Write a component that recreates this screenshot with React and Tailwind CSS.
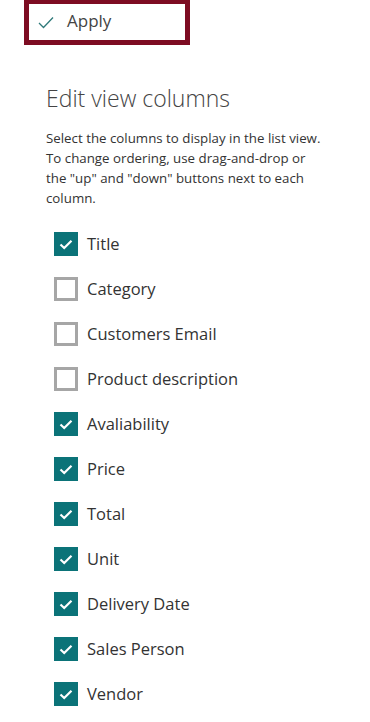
import React, { useState } from 'react'

const initialColumns = [
	{ name: 'Title', checked: true },
	{ name: 'Category', checked: false },
	{ name: 'Customers Email', checked: false },
	{ name: 'Product description', checked: false },
	{ name: 'Avaliability', checked: true },
	{ name: 'Price', checked: true },
	{ name: 'Total', checked: true },
	{ name: 'Unit', checked: true },
	{ name: 'Delivery Date', checked: true },
	{ name: 'Sales Person', checked: true },
	{ name: 'Vendor', checked: true },
];

function App() {
	const [columns, setColumns] = useState(initialColumns);

	function toggle(i) {
		setColumns(columns.map((c, idx) => idx === i ? { ...c, checked: !c.checked } : c));
	}

	return (
		<div className="min-h-screen bg-white text-[#333]" style={{ fontFamily: '"Open Sans", "Noto Sans", sans-serif' }}>
			{/* Apply button, highlighted */}
			<div className="ml-[24px] w-[166px] h-[45px] border-[5px] border-t-[4px] border-[#7d0c22] flex items-center pl-[9px]">
				<svg width="16" height="13" viewBox="0 0 16 13" className="shrink-0">
					<path d="M1 7 L5.5 11.5 L15 1.5" fill="none" stroke="#2f7a7a" strokeWidth="1.3" />
				</svg>
				<span className="ml-[13px] text-[17px] leading-none text-[#444] -mt-[4px]">Apply</span>
			</div>

			<div className="pl-[46px]">
				<h2 className="mt-[38px] text-[23px] font-light leading-[30px] text-[#444]">Edit view columns</h2>
				<p className="mt-[15px] text-[13.3px] leading-[20px] text-[#333] whitespace-nowrap">
					Select the columns to display in the list view.<br />
					To change ordering, use drag-and-drop or<br />
					the "up" and "down" buttons next to each<br />
					column.
				</p>

				{/* Columns list */}
				<div className="mt-[24px] pl-[8px] flex flex-col gap-[21px]">
					{columns.map((c, i) => (
						<label key={c.name} className="flex items-center cursor-pointer" onClick={() => toggle(i)}>
							{c.checked ? (
								<span className="w-[24px] h-[24px] bg-[#0b7378] flex items-center justify-center shrink-0">
									<svg width="14" height="11" viewBox="0 0 14 11">
										<path d="M1.5 5.5 L5.2 9 L12.5 1.8" fill="none" stroke="white" strokeWidth="2.2" />
									</svg>
								</span>
							) : (
								<span className="w-[24px] h-[24px] border-[3px] border-[#a6a6a6] bg-white shrink-0" />
							)}
							<span className="ml-[9px] text-[16.5px] leading-[24px] text-[#333]">{c.name}</span>
						</label>
					))}
				</div>
			</div>
		</div>
	)
}

export default App
